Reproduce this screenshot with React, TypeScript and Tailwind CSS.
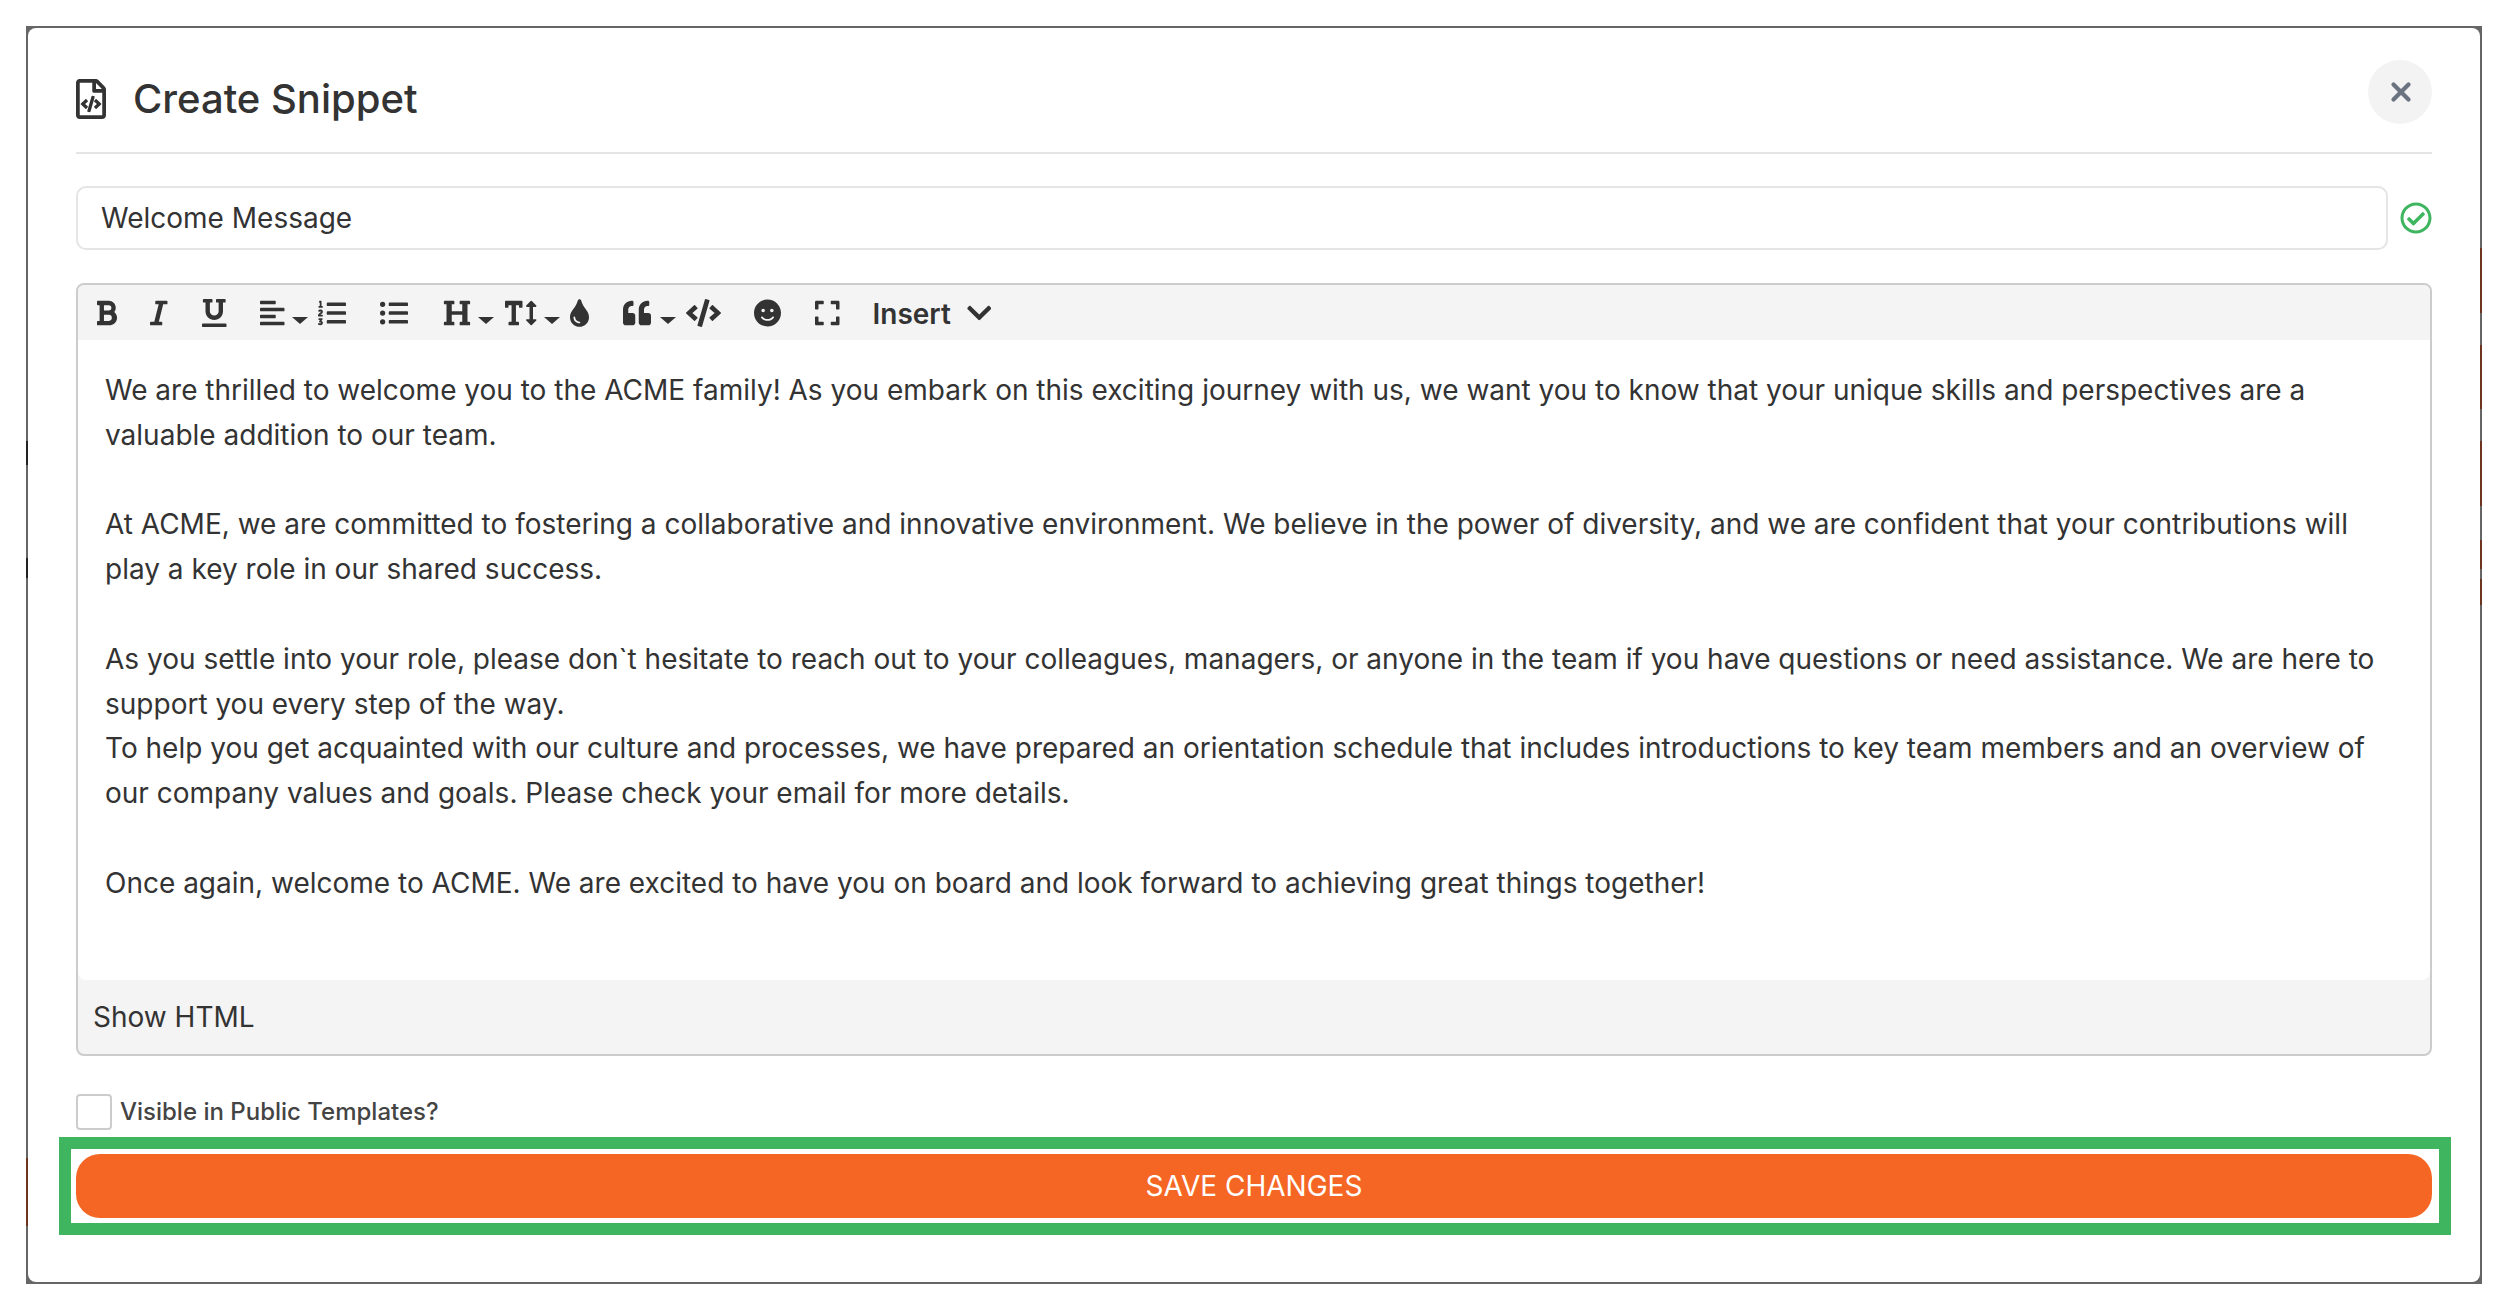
import {
  FaAlignLeft,
  FaBold,
  FaChevronDown,
  FaCode,
  FaExpand,
  FaHeading,
  FaItalic,
  FaListOl,
  FaListUl,
  FaQuoteLeft,
  FaRegCheckCircle,
  FaRegFileCode,
  FaSmile,
  FaTextHeight,
  FaTint,
  FaUnderline,
} from 'react-icons/fa'
import { X } from 'lucide-react'

const paragraphs = [
  'We are thrilled to welcome you to the ACME family! As you embark on this exciting journey with us, we want you to know that your unique skills and perspectives are a valuable addition to our team.',
  '',
  'At ACME, we are committed to fostering a collaborative and innovative environment. We believe in the power of diversity, and we are confident that your contributions will play a key role in our shared success.',
  '',
  'As you settle into your role, please don`t hesitate to reach out to your colleagues, managers, or anyone in the team if you have questions or need assistance. We are here to support you every step of the way.',
  'To help you get acquainted with our culture and processes, we have prepared an orientation schedule that includes introductions to key team members and an overview of our company values and goals. Please check your email for more details.',
  '',
  'Once again, welcome to ACME. We are excited to have you on board and look forward to achieving great things together!',
]

function Caret({ className }: { className: string }) {
  return <span className={`mt-[15px] h-0 w-0 shrink-0 border-x-[8px] border-t-[7px] border-x-transparent border-t-[#333] ${className}`} />
}

function Toolbar() {
  return (
    <div className="flex h-[55px] items-center bg-[#f4f4f4] pl-[18px] text-[#333]">
      <FaBold className="h-[28px] w-[21px] shrink-0" />
      <FaItalic className="ml-[33px] h-[28px] w-[17.5px] shrink-0" />
      <FaUnderline className="ml-[34.5px] h-[28px] w-[24.5px] shrink-0" />
      <FaAlignLeft className="ml-[33.5px] h-[28px] w-[24.5px] shrink-0" />
      <Caret className="ml-[7.5px]" />
      <FaListOl className="ml-[10px] h-[28px] w-[28px] shrink-0" />
      <FaListUl className="ml-[34px] h-[28px] w-[28px] shrink-0" />
      <FaHeading className="ml-[35px] h-[28px] w-[28px] shrink-0" />
      <Caret className="ml-[7px]" />
      <FaTextHeight className="ml-[11px] h-[28px] w-[31.5px] shrink-0" />
      <Caret className="ml-[7.5px]" />
      <FaTint className="ml-[10px] h-[28px] w-[19px] shrink-0" />
      <FaQuoteLeft className="ml-[34px] h-[28px] w-[28px] shrink-0" />
      <Caret className="ml-[9px]" />
      <FaCode className="ml-[10px] h-[28px] w-[35px] shrink-0" />
      <FaSmile className="ml-[33px] h-[28px] w-[27px] shrink-0" />
      <FaExpand className="ml-[34px] h-[28px] w-[24.5px] shrink-0" />
      <span className="mt-[2px] ml-[33px] text-[28px] leading-none font-semibold">Insert</span>
      <FaChevronDown className="ml-[16px] h-[28px] w-[24.5px] shrink-0" />
    </div>
  )
}

export default function App() {
  return (
    <div className="min-h-[1310px] bg-white p-[26px] font-['Inter',sans-serif] text-[#333]">
      <div className="relative h-[1258px] bg-[#666] p-[2px]">
        {/* page behind the modal showing along the edge */}
        <span className="absolute top-[222px] right-0 h-[65px] w-[2px] bg-[#6e3420]" />
        <span className="absolute top-[319px] right-0 h-[64px] w-[2px] bg-[#6e3420]" />
        <span className="absolute top-[415px] right-0 h-[65px] w-[2px] bg-[#6e3420]" />
        <span className="absolute top-[514px] right-0 h-[29px] w-[2px] bg-[#6e3420]" />
        <span className="absolute top-[553px] right-0 h-[26px] w-[2px] bg-[#6e3420]" />
        <span className="absolute top-[1132px] left-0 h-[68px] w-[2px] bg-[#6e3420]" />
        <span className="absolute top-[415px] left-0 h-[24px] w-[2px] bg-[#222]" />
        <span className="absolute top-[532px] left-0 h-[20px] w-[2px] bg-[#222]" />

        <div className="h-full rounded-[8px] bg-white px-[48px] pt-[32px]">
          <div className="flex h-[94px] items-start justify-between border-b-2 border-[#e5e5e5]">
            <div className="flex items-center pt-[13px]">
              <FaRegFileCode className="h-[40px] w-[30px] text-[#333]" />
              <h1 className="ml-[27px] text-[40px] leading-[52px] font-medium">Create Snippet</h1>
            </div>
            <button className="flex h-[64px] w-[64px] items-center justify-center rounded-full bg-[#f3f3f4] pl-[1px] text-[#6b7280]">
              <X className="h-[30px] w-[30px]" strokeWidth={3.4} />
            </button>
          </div>

          <div className="mt-[32px] flex items-center justify-between">
            <div className="flex h-[64px] w-[2312px] items-center rounded-[10px] border-2 border-[#e5e5e5] px-[23px] text-[28px]">
              Welcome Message
            </div>
            <FaRegCheckCircle className="h-[32px] w-[32px] text-[#3fb55f]" />
          </div>

          <div className="mt-[33px] overflow-hidden rounded-[8px] border-2 border-[#ccc] bg-[#f4f4f4]">
            <Toolbar />
            <div className="h-[640px] rounded-b-[8px] bg-white px-[27px] pt-[28px] text-[28px] leading-[44.8px]">
              {paragraphs.map((text, i) => (
                <p key={i} className="min-h-[44.8px]">
                  {text}
                </p>
              ))}
            </div>
            <div className="flex h-[74px] items-center pl-[15px] text-[28px]">Show HTML</div>
          </div>

          <label className="mt-[38px] flex h-[36px] items-center">
            <span className="h-[36px] w-[36px] rounded-[4px] border-2 border-[#ccc] bg-white" />
            <span className="ml-[8px] text-[24px] font-medium text-[#444]">Visible in Public Templates?</span>
          </label>

          <div className="mt-[7px] mr-[-19px] ml-[-17px] border-[12px] border-[#3fb55f] py-[5px] pr-[7px] pl-[5px]">
            <button className="h-[64px] w-full rounded-[24px] bg-[#f56624] text-[28px] text-white">SAVE CHANGES</button>
          </div>
        </div>
      </div>
    </div>
  )
}
